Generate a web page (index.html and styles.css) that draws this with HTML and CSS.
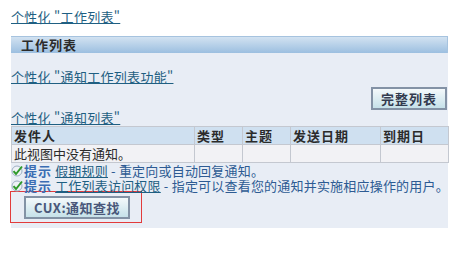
FILE: index.html
```html
<!DOCTYPE html>
<html lang="zh">
  <head>
    <meta charset="UTF-8" />
    <title>工作列表</title>
    <link rel="stylesheet" href="styles.css">
  </head>
  <body>
    <div class="page">
      <a class="plink top" href="#">个性化 "工作列表"</a>

      <div class="panel">
        <div class="panel-head">工作列表</div>

        <a class="plink second" href="#">个性化 "通知工作列表功能"</a>

        <div class="btn-row">
          <button class="btn">完整列表</button>
        </div>

        <a class="plink third" href="#">个性化 "通知列表"</a>

        <table class="notes">
          <colgroup>
            <col class="c-from" />
            <col class="c-type" />
            <col class="c-subj" />
            <col class="c-date" />
            <col class="c-due" />
          </colgroup>
          <thead>
            <tr>
              <th>发件人</th>
              <th>类型</th>
              <th>主题</th>
              <th>发送日期</th>
              <th>到期日</th>
            </tr>
          </thead>
          <tbody>
            <tr>
              <td>此视图中没有通知。</td>
              <td></td>
              <td></td>
              <td></td>
              <td></td>
            </tr>
          </tbody>
        </table>

        <div class="tip">
          <svg class="check" width="12" height="12" viewBox="0 0 12 12">
            <circle cx="6" cy="6" r="5" fill="#eef2f6" stroke="#9fb0c4" stroke-width="1" />
            <path d="M2.5 6.2 L5 9 L11 1.5" fill="none" stroke="#2f9a2a" stroke-width="2" />
          </svg><b>提示</b> <a href="#">假期规则</a> - 重定向或自动回复通知。
        </div>
        <div class="tip">
          <svg class="check" width="12" height="12" viewBox="0 0 12 12">
            <circle cx="6" cy="6" r="5" fill="#eef2f6" stroke="#9fb0c4" stroke-width="1" />
            <path d="M2.5 6.2 L5 9 L11 1.5" fill="none" stroke="#2f9a2a" stroke-width="2" />
          </svg><b>提示</b> <a href="#">工作列表访问权限</a> - 指定可以查看您的通知并实施相应操作的用户。
        </div>

        <div class="mark">
          <button class="btn cux">CUX:通知查找</button>
        </div>
      </div>
    </div>
  </body>
</html>
```

FILE: styles.css
```css
body {
  margin: 0;
  font-family: "Noto Sans CJK SC", "Liberation Sans", sans-serif;
  font-size: 13px;
  line-height: 16px;
  background: #ffffff;
}

.page {
  padding: 9px 14px 0 11px;
}

.plink {
  display: block;
  width: max-content;
  color: #1f5f82;
  text-decoration: underline;
  line-height: 16px;
  letter-spacing: 0.3px;
}

.top {
  margin-bottom: 11px;
}

.panel {
  background: #e8edf5;
  padding-bottom: 5px;
}

.panel-head {
  height: 16px;
  line-height: 16px;
  padding-left: 10px;
  font-weight: bold;
  letter-spacing: 1px;
  color: #2b2b2b;
  border-top: 1px solid #a6c3df;
  border-right: 1px solid #a6c3df;
  background: linear-gradient(to bottom, #d2e2f1, #9cbfe0);
  margin-bottom: 16px;
}

.btn-row {
  display: flex;
  justify-content: flex-end;
  margin-top: 2px;
}

.btn {
  font-family: "Noto Sans CJK SC", "Liberation Sans", sans-serif;
  font-size: 13px;
  font-weight: bold;
  letter-spacing: 1px;
  color: #333b4f;
  width: 76px;
  height: 23px;
  padding: 0;
  border: 2px solid #8392a5;
  background: linear-gradient(to bottom, #f4f9fb, #c6e1e9);
  line-height: 18px;
  margin-right: 1px;
}

.third {
  margin-top: 0;
}

.notes {
  width: 437px;
  table-layout: fixed;
  border-collapse: collapse;
}

.notes th,
.notes td {
  border: 1px solid #c4c8d0;
  height: 17px;
  line-height: 17px;
  padding: 0 2px;
  text-align: left;
  color: #2b2b2b;
  white-space: nowrap;
}

.notes th {
  background: #cfe0f0;
  font-weight: bold;
  letter-spacing: 1px;
}

.notes td {
  background: #f2f2f5;
}

.c-from { width: 183px; }
.c-type { width: 48px; }
.c-subj { width: 48px; }
.c-date { width: 90px; }
.c-due { width: 68px; }

.tip {
  color: #2d5b93;
  line-height: 15px;
  white-space: nowrap;
  letter-spacing: 0.2px;
}

.tip:first-of-type {
  margin-top: 1px;
}

.tip b {
  color: #3a6db3;
  margin-left: 1px;
  letter-spacing: 1px;
}

.tip a {
  color: #1f5f82;
}

.check {
  vertical-align: -1px;
}

.mark {
  width: 132px;
  height: 32px;
  border: 1px solid #e23b3b;
  margin-left: -1px;
  margin-top: -2px;
  padding: 4px 0 0 13px;
  box-sizing: border-box;
}

.cux {
  width: 106px;
  color: #4a587a;
  letter-spacing: 0.5px;
}
```
